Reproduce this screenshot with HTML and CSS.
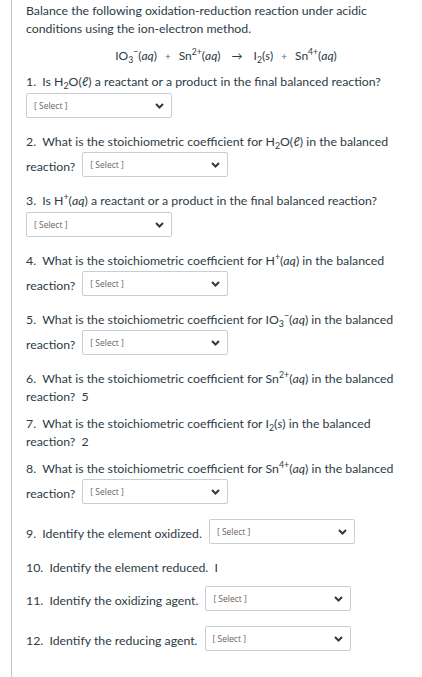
FILE: index.html
```html
<!DOCTYPE html>
<html>
<head>
<meta charset="utf-8">
<link rel="stylesheet" href="styles.css">
</head>
<body>
<div class="page">
  <p class="intro">Balance the following oxidation-reduction reaction under acidic<br>conditions using the ion-electron method.</p>
  <p class="eq">IO<sub>3</sub><sup>−</sup>(<i>aq</i>)<span class="op">+</span>Sn<sup>2+</sup>(<i>aq</i>)<span class="arrow">→</span>I<sub>2</sub>(<i>s</i>)<span class="op">+</span>Sn<sup>4+</sup>(<i>aq</i>)</p>

  <div class="q">
    <p class="line">1.&nbsp; Is H<sub>2</sub>O(ℓ) a reactant or a product in the final balanced reaction?</p>
    <div class="sel block"><span class="sel-text">[ Select ]</span><svg class="chev" width="9" height="6" viewBox="0 0 9 6"><polyline points="1,1 4.5,4.5 8,1" fill="none" stroke="#2d3b45" stroke-width="2"/></svg></div>
  </div>

  <div class="q">
    <p class="line">2.&nbsp; What is the stoichiometric coefficient for H<sub>2</sub>O(ℓ) in the balanced</p>
    <div class="row"><span class="label">reaction?</span><div class="sel"><span class="sel-text">[ Select ]</span><svg class="chev" width="9" height="6" viewBox="0 0 9 6"><polyline points="1,1 4.5,4.5 8,1" fill="none" stroke="#2d3b45" stroke-width="2"/></svg></div></div>
  </div>

  <div class="q">
    <p class="line">3.&nbsp; Is H<sup>+</sup>(<i>aq</i>) a reactant or a product in the final balanced reaction?</p>
    <div class="sel block"><span class="sel-text">[ Select ]</span><svg class="chev" width="9" height="6" viewBox="0 0 9 6"><polyline points="1,1 4.5,4.5 8,1" fill="none" stroke="#2d3b45" stroke-width="2"/></svg></div>
  </div>

  <div class="q">
    <p class="line">4.&nbsp; What is the stoichiometric coefficient for H<sup>+</sup>(<i>aq</i>) in the balanced</p>
    <div class="row"><span class="label">reaction?</span><div class="sel"><span class="sel-text">[ Select ]</span><svg class="chev" width="9" height="6" viewBox="0 0 9 6"><polyline points="1,1 4.5,4.5 8,1" fill="none" stroke="#2d3b45" stroke-width="2"/></svg></div></div>
  </div>

  <div class="q">
    <p class="line">5.&nbsp; What is the stoichiometric coefficient for IO<sub>3</sub><sup>−</sup>(<i>aq</i>) in the balanced</p>
    <div class="row"><span class="label">reaction?</span><div class="sel"><span class="sel-text">[ Select ]</span><svg class="chev" width="9" height="6" viewBox="0 0 9 6"><polyline points="1,1 4.5,4.5 8,1" fill="none" stroke="#2d3b45" stroke-width="2"/></svg></div></div>
  </div>

  <div class="q">
    <p class="line">6.&nbsp; What is the stoichiometric coefficient for Sn<sup>2+</sup>(<i>aq</i>) in the balanced<br>reaction?&nbsp; 5</p>
  </div>

  <div class="q">
    <p class="line">7.&nbsp; What is the stoichiometric coefficient for I<sub>2</sub>(<i>s</i>) in the balanced<br>reaction?&nbsp; 2</p>
  </div>

  <div class="q">
    <p class="line">8.&nbsp; What is the stoichiometric coefficient for Sn<sup>4+</sup>(<i>aq</i>) in the balanced</p>
    <div class="row"><span class="label">reaction?</span><div class="sel"><span class="sel-text">[ Select ]</span><svg class="chev" width="9" height="6" viewBox="0 0 9 6"><polyline points="1,1 4.5,4.5 8,1" fill="none" stroke="#2d3b45" stroke-width="2"/></svg></div></div>
  </div>

  <div class="q">
    <div class="row first"><span class="label">9.&nbsp; Identify the element oxidized.</span><div class="sel"><span class="sel-text">[ Select ]</span><svg class="chev" width="9" height="6" viewBox="0 0 9 6"><polyline points="1,1 4.5,4.5 8,1" fill="none" stroke="#2d3b45" stroke-width="2"/></svg></div></div>
  </div>

  <div class="q">
    <p class="line">10.&nbsp; Identify the element reduced.&nbsp; I</p>
  </div>

  <div class="q">
    <div class="row first"><span class="label">11.&nbsp; Identify the oxidizing agent.</span><div class="sel"><span class="sel-text">[ Select ]</span><svg class="chev" width="9" height="6" viewBox="0 0 9 6"><polyline points="1,1 4.5,4.5 8,1" fill="none" stroke="#2d3b45" stroke-width="2"/></svg></div></div>
  </div>

  <div class="q">
    <div class="row first"><span class="label">12.&nbsp; Identify the reducing agent.</span><div class="sel"><span class="sel-text">[ Select ]</span><svg class="chev" width="9" height="6" viewBox="0 0 9 6"><polyline points="1,1 4.5,4.5 8,1" fill="none" stroke="#2d3b45" stroke-width="2"/></svg></div></div>
  </div>
</div>
</body>
</html>
```

FILE: styles.css
```css
html, body {
  margin: 0;
  padding: 0;
  background: #ffffff;
  overflow: hidden;
}

body {
  font-family: Lato, "Open Sans", "Liberation Sans", sans-serif;
  font-size: 12.3px;
  line-height: 18px;
  color: #2d3b45;
}

.page {
  margin-left: 11px;
  border-left: 1px solid #c4c4c4;
  padding: 2px 0 0 14px;
  width: 415px;
  min-height: 677px;
  box-sizing: border-box;
}

p {
  margin: 0;
}

sub, sup {
  font-size: 0.72em;
  line-height: 0;
}

sub {
  vertical-align: -0.3em;
}

sup {
  vertical-align: 0.55em;
}

.eq {
  margin-top: 9px;
  text-align: center;
  width: 400px;
  font-size: 12px;
}

.op {
  display: inline-block;
  padding: 0 8px;
  font-size: 10px;
  color: #5a666e;
}

.arrow {
  display: inline-block;
  padding: 0 11px;
  font-size: 11px;
}

.q {
  margin-top: 9px;
}

.eq + .q {
  margin-top: 8px;
}

.row {
  display: flex;
  align-items: center;
  gap: 7px;
  margin-top: 1px;
  margin-bottom: 15px;
}

.row.first {
  margin-top: 0;
}

.label {
  padding-top: 5px;
  white-space: nowrap;
}

.sel {
  display: flex;
  align-items: center;
  justify-content: space-between;
  box-sizing: border-box;
  width: 146px;
  height: 25px;
  border: 1px solid #c9ced2;
  border-radius: 2px;
  padding: 0 7px 0 7px;
  background: #fff;
  flex: none;
}

.sel.block {
  margin-top: 2px;
  margin-bottom: 15px;
}

.sel-text {
  font-family: "Open Sans", Lato, sans-serif;
  font-size: 8.5px;
  line-height: 10px;
  color: #6e6259;
}

.chev {
  display: block;
  margin-top: 1px;
}
```
